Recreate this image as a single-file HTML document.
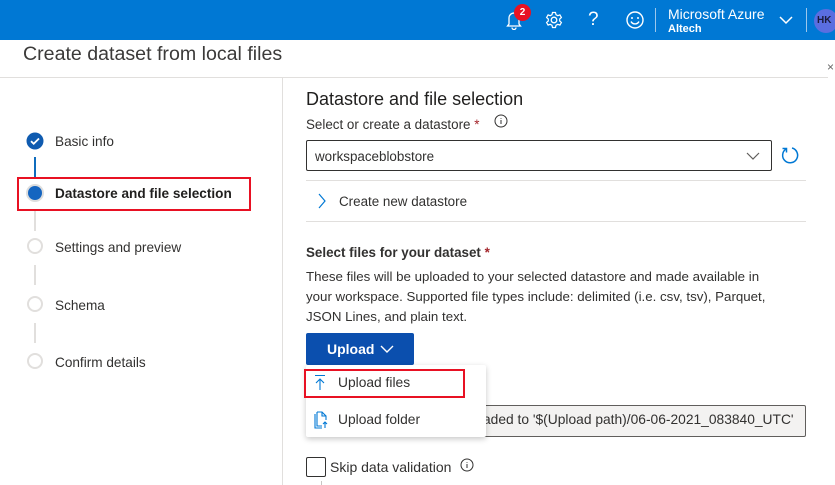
<!DOCTYPE html>
<html><head><meta charset="utf-8"><style>
*{margin:0;padding:0;box-sizing:border-box}
body{width:835px;height:485px;overflow:hidden;background:#fff;font-family:"Liberation Sans",sans-serif;color:#323130;position:relative;font-size:13.4px}
.a{position:absolute;white-space:nowrap}
.hdr{position:absolute;left:0;top:0;width:835px;height:40px;background:#0078d4}
.sep{position:absolute;top:8px;width:1px;height:24px;background:#9cc7ec}
.step{position:absolute;left:27px;width:16px;height:16px;border-radius:50%;border:2px solid #e1dfdd;background:#fff}
.conn{position:absolute;left:34px;width:2px;height:20px;background:#e1dfdd}
.st{position:absolute;left:55px;font-size:13.6px;color:#323130}
</style></head><body>
<div class="hdr">
  <svg class="a" style="left:505px;top:10px" width="18" height="20" viewBox="0 0 18 20"><path d="M4 14V8a5 5 0 0 1 10 0v6l1.5 2h-13z M7 17.5a2 2 0 0 0 4 0" fill="none" stroke="#fff" stroke-width="1.3"/></svg>
  <div class="a" style="left:514px;top:4px;width:17px;height:17px;border-radius:50%;background:#e81123;color:#fff;font-size:10px;font-weight:bold;text-align:center;line-height:17px">2</div>
  <svg class="a" style="left:545px;top:11px" width="18" height="18" viewBox="0 0 18 18"><circle cx="9" cy="9" r="2.8" fill="none" stroke="#fff" stroke-width="1.3"/><path d="M7.5 1.5h3l.5 2.2 1.8 1 2.1-.8 1.5 2.6-1.7 1.5v2l1.7 1.5-1.5 2.6-2.1-.8-1.8 1-.5 2.2h-3l-.5-2.2-1.8-1-2.1.8-1.5-2.6 1.7-1.5v-2L1.6 6.5l1.5-2.6 2.1.8 1.8-1z" fill="none" stroke="#fff" stroke-width="1.2"/></svg>
  <div class="a" style="left:588px;top:9px;color:#fff;font-size:19px">?</div>
  <svg class="a" style="left:625px;top:10px" width="20" height="20" viewBox="0 0 20 20"><circle cx="10" cy="10" r="8" fill="none" stroke="#fff" stroke-width="1.4"/><circle cx="7" cy="8" r="1" fill="#fff"/><circle cx="13" cy="8" r="1" fill="#fff"/><path d="M6 11.5a4.5 4.5 0 0 0 8 0" fill="none" stroke="#fff" stroke-width="1.4"/></svg>
  <div class="sep" style="left:655px"></div>
  <div class="a" style="left:668px;top:6px;color:#fff;font-size:14px">Microsoft Azure</div>
  <div class="a" style="left:668px;top:23px;color:#fff;font-size:11px;font-weight:bold">Altech</div>
  <svg class="a" style="left:778px;top:14px" width="16" height="12" viewBox="0 0 16 12"><path d="M2 3l6 6 6-6" fill="none" stroke="#fff" stroke-width="1.5"/></svg>
  <div class="sep" style="left:806px"></div>
  <div class="a" style="left:814px;top:9px;width:24px;height:24px;border-radius:50%;background:#5a6ee0;color:#1b1b3a;font-size:10px;font-weight:bold;line-height:24px;padding-left:3px">HK</div>
</div>
<div class="a" style="left:23px;top:43px;font-size:19.6px;color:#3b3a39">Create dataset from local files</div>
<div class="a" style="left:0;top:77px;width:828px;height:1px;background:#e1dfdd"></div>
<div class="a" style="left:827px;top:60px;color:#666;font-size:12px">×</div>
<div class="a" style="left:282px;top:78px;width:1px;height:407px;background:#e1dfdd"></div>

<svg class="a" style="left:26px;top:132px" width="18" height="18" viewBox="0 0 18 18"><circle cx="9" cy="9" r="8.5" fill="#0f5bb0"/><path d="M5 9.2l2.7 2.6L13 6.5" fill="none" stroke="#fff" stroke-width="1.8"/></svg>
<div class="st" style="top:134px">Basic info</div>
<div class="conn" style="left:34px;top:157px;background:#0f6cbd"></div>
<div class="a" style="left:28px;top:186px;width:14px;height:14px;border-radius:50%;background:#1565c0;box-shadow:0 0 0 2px #ddd"></div>
<div class="st" style="top:186px;font-weight:bold;color:#201f1e">Datastore and file selection</div>
<div class="a" style="left:17px;top:177px;width:234px;height:34px;border:2px solid #e81123"></div>
<div class="conn" style="top:211px"></div>
<div class="step" style="top:238px"></div>
<div class="st" style="top:240px">Settings and preview</div>
<div class="conn" style="top:265px"></div>
<div class="step" style="top:296px"></div>
<div class="st" style="top:298px">Schema</div>
<div class="conn" style="top:323px"></div>
<div class="step" style="top:353px"></div>
<div class="st" style="top:355px">Confirm details</div>

<div class="a" style="left:306px;top:89px;font-size:18px;color:#201f1e">Datastore and file selection</div>
<div class="a" style="left:306px;top:117px">Select or create a datastore <span style="color:#a4262c">*</span></div>
<svg class="a" style="left:494px;top:114px" width="14" height="14" viewBox="0 0 14 14"><circle cx="7" cy="7" r="6" fill="none" stroke="#323130"/><path d="M7 6v4M7 4v.8" stroke="#323130"/></svg>
<div class="a" style="left:306px;top:140px;width:466px;height:31px;border:1px solid #323130;border-radius:2px"></div>
<div class="a" style="left:315px;top:149px">workspaceblobstore</div>
<svg class="a" style="left:746px;top:151px" width="14" height="10" viewBox="0 0 14 10"><path d="M1 2l6 6 6-6" fill="none" stroke="#605e5c" stroke-width="1.2"/></svg>
<svg class="a" style="left:780px;top:145px" width="20" height="20" viewBox="0 0 20 20"><path d="M6 4A7.5 7.5 0 1 0 12 3" fill="none" stroke="#0078d4" stroke-width="1.5"/><path d="M2.5 3.5H6.5V7.5" fill="none" stroke="#0078d4" stroke-width="1.5"/></svg>
<div class="a" style="left:306px;top:180px;width:500px;height:1px;background:#e1dfdd"></div>
<svg class="a" style="left:317px;top:193px" width="10" height="16" viewBox="0 0 10 16"><path d="M2 1l6 7-6 7" fill="none" stroke="#0078d4" stroke-width="1.2"/></svg>
<div class="a" style="left:339px;top:194px">Create new datastore</div>
<div class="a" style="left:306px;top:221px;width:500px;height:1px;background:#e1dfdd"></div>
<div class="a" style="left:306px;top:245px;font-weight:bold;color:#323130">Select files for your dataset <span style="color:#a4262c">*</span></div>
<div class="a" style="left:306px;top:267px;line-height:20px;font-size:13.3px">These files will be uploaded to your selected datastore and made available in<br>your workspace. Supported file types include: delimited (i.e. csv, tsv), Parquet,<br>JSON Lines, and plain text.</div>
<div class="a" style="left:306px;top:333px;width:108px;height:32px;background:#0b4fae;border-radius:2px;color:#fff;font-weight:bold;font-size:14px;line-height:32px;padding-left:21px">Upload</div>
<svg class="a" style="left:380px;top:344px" width="14" height="10" viewBox="0 0 14 10"><path d="M1 2l6 6 6-6" fill="none" stroke="#fff" stroke-width="1.4"/></svg>

<div class="a" style="left:480px;top:405px;width:326px;height:32px;background:#f3f2f1;border:1px solid #605e5c;border-radius:2px"></div>
<div class="a" style="left:483px;top:412px;color:#323130;font-size:13.8px">aded to '$(Upload path)/06-06-2021_083840_UTC'</div>

<div class="a" style="left:306px;top:365px;width:180px;height:72px;background:#fff;border-radius:2px;box-shadow:0 2px 6px rgba(0,0,0,.22)"></div>
<svg class="a" style="left:313px;top:374px" width="14" height="18" viewBox="0 0 14 18"><path d="M2 1.5h10M7 16V5M3 9l4-4 4 4" fill="none" stroke="#0078d4" stroke-width="1.1"/></svg>
<div class="a" style="left:338px;top:375px;font-size:13.8px">Upload files</div>
<div class="a" style="left:304px;top:369px;width:161px;height:29px;border:2px solid #e81123"></div>
<svg class="a" style="left:313px;top:409px" width="16" height="20" viewBox="0 0 16 20"><path d="M4 3h5l4 4v4M4 3v14h5M2 5v14h7M9 3v4h4M12 19v-6M10 15l2-2 2 2" fill="none" stroke="#0078d4" stroke-width="1.1"/></svg>
<div class="a" style="left:338px;top:412px;font-size:13.8px">Upload folder</div>

<div class="a" style="left:306px;top:457px;width:20px;height:20px;border:1px solid #323130;border-radius:2px"></div>
<div class="a" style="left:330px;top:459px;font-size:14px">Skip data validation</div>
<svg class="a" style="left:460px;top:458px" width="14" height="14" viewBox="0 0 14 14"><circle cx="7" cy="7" r="6" fill="none" stroke="#323130"/><path d="M7 6v4M7 4v.8" stroke="#323130"/></svg>
<div class="a" style="left:321px;top:481px;width:1px;height:4px;background:#c8c6c4"></div>
</body></html>
